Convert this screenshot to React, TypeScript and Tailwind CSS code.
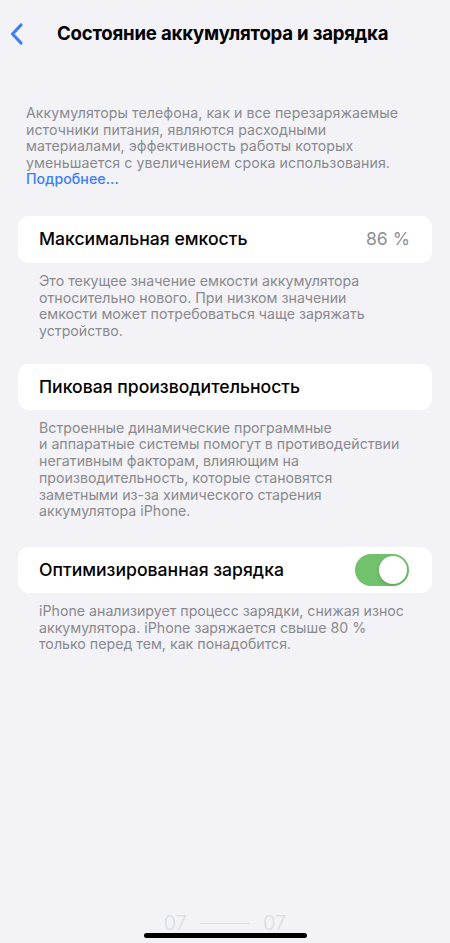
import React, { useState } from 'react';

const font = { fontFamily: 'Inter, "Noto Sans", sans-serif' };

function Footer({ lines, pt }: { lines: string[]; pt: string }) {
  return (
    <p className={`px-[39px] ${pt} text-[14.2px] leading-[16.7px] text-[#8a8a8e]`}>
      {lines.map((l, i) => (
        <span key={i} className="block">
          {l}
        </span>
      ))}
    </p>
  );
}

export default function App() {
  const [optimized, setOptimized] = useState(true);

  return (
    <div className="min-h-screen bg-[#f2f2f7] flex flex-col" style={font}>
      {/* Header */}
      <div className="h-[68px] flex items-center relative">
        <button className="absolute left-[7px] top-[22px] p-0">
          <svg width="18" height="24" viewBox="0 0 18 24" fill="none">
            <path d="M14 3 L5.5 12 L14 21" stroke="#3b7ef5" strokeWidth="3.2" strokeLinecap="round" strokeLinejoin="round" />
          </svg>
        </button>
        <h1 className="pl-[57px] text-[18.6px] font-bold text-black tracking-[-0.2px]">
          Состояние аккумулятора и зарядка
        </h1>
      </div>

      {/* Intro */}
      <p className="px-[26px] pt-[37px] text-[14.2px] leading-[16.6px] text-[#8a8a8e] tracking-[0.05px]">
        <span className="block">Аккумуляторы телефона, как и все перезаряжаемые</span>
        <span className="block">источники питания, являются расходными</span>
        <span className="block">материалами, эффективность работы которых</span>
        <span className="block">уменьшается с увеличением срока использования.</span>
        <span className="block text-[#3b7ef5] font-medium">Подробнее...</span>
      </p>

      {/* Max capacity */}
      <div className="mx-[18px] mt-[28px] h-[47px] bg-white rounded-[11px] flex items-center justify-between pl-[21px] pr-[22px]">
        <span className="text-[17.6px] font-medium text-black">Максимальная емкость</span>
        <span className="text-[17.6px] text-[#8e8e93]">86 %</span>
      </div>
      <Footer
        pt="pt-[10px]"
        lines={[
          'Это текущее значение емкости аккумулятора',
          'относительно нового. При низком значении',
          'емкости может потребоваться чаще заряжать',
          'устройство.',
        ]}
      />

      {/* Peak performance */}
      <div className="mx-[18px] mt-[24px] h-[46px] bg-white rounded-[11px] flex items-center pl-[21px]">
        <span className="text-[17.6px] font-medium text-black">Пиковая производительность</span>
      </div>
      <Footer
        pt="pt-[10px]"
        lines={[
          'Встроенные динамические программные',
          'и аппаратные системы помогут в противодействии',
          'негативным факторам, влияющим на',
          'производительность, которые становятся',
          'заметными из-за химического старения',
          'аккумулятора iPhone.',
        ]}
      />

      {/* Optimized charging */}
      <div className="mx-[18px] mt-[27px] h-[46px] bg-white rounded-[11px] flex items-center justify-between pl-[21px] pr-[23px]">
        <span className="text-[17.6px] font-medium text-black">Оптимизированная зарядка</span>
        <button
          onClick={() => setOptimized(!optimized)}
          className={`w-[54px] h-[32px] rounded-full p-[2px] flex items-center ${
            optimized ? 'bg-[#72c16d] justify-end' : 'bg-[#e3e3e8] justify-start'
          }`}
        >
          <span className="w-[28px] h-[28px] rounded-full bg-white shadow-[0_2px_4px_rgba(0,0,0,0.15)]" />
        </button>
      </div>
      <Footer
        pt="pt-[10px]"
        lines={[
          'iPhone анализирует процесс зарядки, снижая износ',
          'аккумулятора. iPhone заряжается свыше 80 %',
          'только перед тем, как понадобится.',
        ]}
      />

      <div className="flex-1" />

      {/* Bottom */}
      <div className="relative h-[40px] flex justify-center">
        <div className="absolute top-[5px] flex items-center gap-[13px] text-[#dcdce1] text-[20px] font-light">
          <span>07</span>
          <span className="w-[50px] h-[1px] bg-[#dcdce1]" />
          <span>07</span>
        </div>
        <div className="absolute bottom-[5px] w-[163px] h-[5px] rounded-full bg-black" />
      </div>
    </div>
  );
}
